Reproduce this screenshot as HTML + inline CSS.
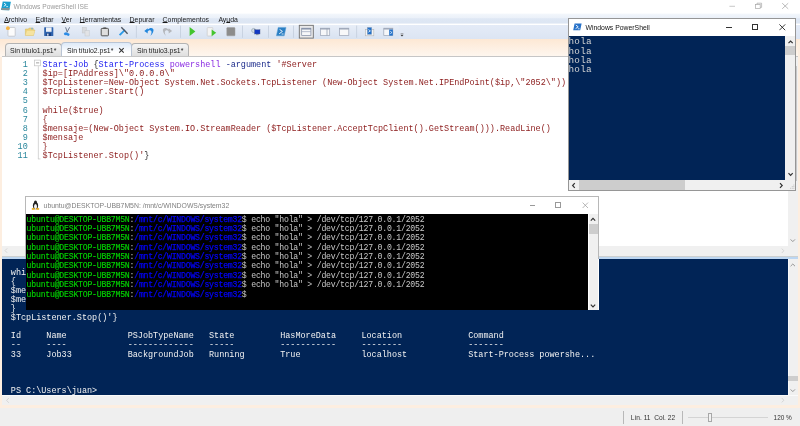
<!DOCTYPE html>
<html><head><meta charset="utf-8"><title>Windows PowerShell ISE</title>
<style>
html,body{margin:0;padding:0;}
body{width:800px;height:426px;overflow:hidden;position:relative;background:#fff;will-change:transform;font-family:"Liberation Sans",sans-serif;}
div,span,pre{position:absolute;margin:0;padding:0;box-sizing:border-box;white-space:pre;}
span{position:static;}
.ui{font-family:"Liberation Sans",sans-serif;font-size:6.9px;color:#1a1a1a;line-height:9px;}
.mono{font-family:"Liberation Mono",monospace;}
.ed{font-family:"Liberation Mono",monospace;font-size:8.47px;line-height:9.08px;color:#8b1a1a;left:42.6px;}
.ln{font-family:"Liberation Mono",monospace;font-size:8.47px;line-height:9.08px;color:#2a879c;left:10.4px;width:17.4px;text-align:right;}
.cs{font-family:"Liberation Mono",monospace;font-size:8.47px;line-height:9.08px;color:#f2f2f2;left:10.8px;}
.ub{font-family:"Liberation Mono",monospace;font-size:8.2px;letter-spacing:-0.234px;line-height:9.37px;color:#c8c8c8;left:26.6px;height:9.37px;}
.g{color:#00d400;-webkit-text-stroke:0.14px #00d400}.b{color:#0404f6;-webkit-text-stroke:0.25px #0404f6}
.ps{font-family:"Liberation Mono",monospace;font-size:9.3px;letter-spacing:0.2px;line-height:9.37px;color:#d4d4d4;left:568.6px;}
.cmd{color:#2424f0}.str{color:#8b1a1a}.prm{color:#1b2a8a}.arg{color:#8a2be2}
u{text-decoration:underline;text-decoration-thickness:0.6px;text-underline-offset:0.1px;}
</style></head><body>

<!-- ===== ISE main window ===== -->
<div id="titlebar" style="left:0;top:0;width:800px;height:13.5px;background:#fff;"></div>
<svg style="position:absolute;left:0;top:0;" width="13" height="12" viewBox="0 0 13 12"><path d="M2.7 1.6 L10.9 1.8 L9.2 10.3 L1.1 10.1 Z" fill="#1a9fce"/><path d="M1.5 7.9 L9.7 7.9 L9.2 10.3 L1.1 10.1 Z" fill="#7f9599"/><path d="M4 3.1 L6.1 4.7 L3.8 6.3" fill="none" stroke="#fff" stroke-width="0.9"/><path d="M6.2 6.6 L8.1 6.6" stroke="#fff" stroke-width="0.7"/></svg>
<div class="ui" style="left:13.5px;top:2.4px;color:#9a9a9a;font-size:6.65px;">Windows PowerShell ISE</div>
<svg style="position:absolute;left:725px;top:0;" width="70" height="13" viewBox="725 0 70 13">
 <path d="M729.4 6.3 L735 6.3" stroke="#b0b0b0" stroke-width="0.7" fill="none"/>
 <rect x="755.6" y="4.4" width="4.6" height="4.2" fill="none" stroke="#a8a8a8" stroke-width="0.7"/>
 <path d="M757 4.4 L757 3.2 L761.6 3.2 L761.6 7.4 L760.2 7.4" fill="none" stroke="#a8a8a8" stroke-width="0.7"/>
 <path d="M782.2 3.2 L788.2 8.8 M788.2 3.2 L782.2 8.8" stroke="#aaa" stroke-width="0.8" fill="none"/>
</svg>


<div id="menubg" style="left:0;top:12.8px;width:800px;height:11.7px;background:linear-gradient(#ffffff 0%,#f1f5fb 14%,#ebf1f9 44%,#dee7f4 52%,#dde6f3 88%,#f3f6fb 100%);"></div>
<div id="toolbg2" style="left:0;top:24.5px;width:800px;height:14.8px;background:linear-gradient(#e4ebf7,#dce5f3);"></div>
<div class="ui" style="left:4.2px;top:15.1px;"><u>A</u>rchivo</div>
<div class="ui" style="left:35.6px;top:15.1px;"><u>E</u>ditar</div>
<div class="ui" style="left:61.6px;top:15.1px;"><u>V</u>er</div>
<div class="ui" style="left:79.8px;top:15.1px;"><u>H</u>erramientas</div>
<div class="ui" style="left:129.6px;top:15.1px;"><u>D</u>epurar</div>
<div class="ui" style="left:162.6px;top:15.1px;"><u>C</u>omplementos</div>
<div class="ui" style="left:218.4px;top:15.1px;">Ay<u>u</u>da</div>

<div id="tabstrip" style="left:0;top:39.3px;width:800px;height:17.4px;background:linear-gradient(#fde8d4,#fef7f0);"></div>
<div id="leftedge" style="left:0;top:57px;width:2.2px;height:349px;background:#fdeee0;"></div>


<!-- toolbar background -->
<div id="toolbarbg" style="left:0;top:24.6px;width:398.7px;height:14.6px;border-radius:0 2px 2px 0;background:linear-gradient(#e8eef8,#d8e2f1);"></div>
<svg id="toolbar" style="position:absolute;left:0;top:24px;" width="410" height="16" viewBox="0 24 410 16">
 <!-- new -->
 <rect x="8" y="27.4" width="7.2" height="8.8" rx="0.8" fill="#fcfcfc" stroke="#b9bcc2" stroke-width="0.7"/>
 <circle cx="7.9" cy="28.2" r="1.9" fill="#f6b444"/>
 <!-- open -->
 <path d="M25.4 35.4 L25.4 29 L28.3 29 L29.2 28 L33.2 28 L33.2 30 L34.9 30 L33.5 35.4 Z" fill="#ecd27a" stroke="#d8b85a" stroke-width="0.5"/>
 <path d="M25.5 35.3 L27 30.8 L34.8 30.8 L33.4 35.3 Z" fill="#f5e3a0"/>
 <circle cx="32" cy="28.6" r="0.9" fill="#7fb2d9"/>
 <!-- save -->
 <rect x="44.2" y="27.2" width="9.1" height="8.8" rx="0.5" fill="#2d62ad"/>
 <rect x="46" y="27.4" width="5.6" height="4.4" fill="#eef1f5"/>
 <rect x="46.4" y="33.2" width="4.6" height="2.8" fill="#1b3f7e"/>
 <rect x="47" y="33.6" width="1.6" height="2.1" fill="#c9d5e8"/>
 <!-- cut -->
 <path d="M65.6 27.3 L67.3 32.2 M69.6 27.3 L67 32.2" stroke="#5d6b80" stroke-width="0.9" fill="none"/>
 <ellipse cx="66" cy="33.7" rx="2.1" ry="1.5" fill="#2a8be6"/>
 <ellipse cx="68.2" cy="34.6" rx="1.3" ry="1.3" fill="#2a8be6"/>
 <!-- copy -->
 <rect x="82.2" y="27.6" width="4.2" height="5.4" fill="#d9dbde" stroke="#c3c6ca" stroke-width="0.5"/>
 <rect x="85" y="30.6" width="4.2" height="5.4" fill="#e2e3e6" stroke="#c3c6ca" stroke-width="0.5"/>
 <!-- paste -->
 <rect x="101.2" y="28.4" width="7.2" height="7.4" rx="0.7" fill="#dedede" stroke="#555" stroke-width="1"/>
 <rect x="103.3" y="27.4" width="3" height="1.5" fill="#555"/>
 <!-- ps clear -->
 <path d="M119.6 35.2 L125 29.8" stroke="#2a9ae8" stroke-width="1.9" fill="none"/>
 <path d="M121.3 27.2 L127.6 33.8" stroke="#4d5560" stroke-width="1.3" fill="none"/>
 <!-- sep -->
 <rect x="135.9" y="25.6" width="0.8" height="12.2" fill="#c3cddc"/>
 <!-- undo -->
 <path id="undo" d="M144.3 30.9 L147.7 28.2 L147.7 29.5 C150 27 153.9 27.4 153.5 30.6 C153.2 33 151.6 35 150.3 36 C151.6 33.6 152.2 30.8 150.4 30.4 C149.4 30.2 148.4 30.8 147.7 31.5 L147.7 33.4 Z" fill="#2186dc"/>
 <!-- redo -->
 <path d="M144.3 30.9 L147.7 28.2 L147.7 29.5 C150 27 153.9 27.4 153.5 30.6 C153.2 33 151.6 35 150.3 36 C151.6 33.6 152.2 30.8 150.4 30.4 C149.4 30.2 148.4 30.8 147.7 31.5 L147.7 33.4 Z" fill="#b4b7bc" transform="translate(316.4 0) scale(-1 1)"/>
 <!-- sep -->
 <rect x="180.1" y="25.6" width="0.8" height="12.2" fill="#c3cddc"/>
 <!-- run -->
 <path d="M189.6 27 L195.4 31.5 L189.6 36 Z" fill="#43c52f"/>
 <!-- run selection -->
 <rect x="207.2" y="27.6" width="5.6" height="8.4" rx="0.6" fill="#f4f4f4" stroke="#c4c4c4" stroke-width="0.6"/>
 <path d="M211.6 29.6 L216.2 32.8 L211.6 36.2 Z" fill="#43c52f"/>
 <!-- stop -->
 <rect x="226.8" y="27.6" width="8.2" height="8.2" rx="0.6" fill="#8c8c8c" stroke="#9d9d9d" stroke-width="0.5"/>
 <!-- sep -->
 <rect x="242.2" y="25.6" width="0.8" height="12.2" fill="#c3cddc"/>
 <!-- remote -->
 <circle cx="253.7" cy="30.5" r="2.1" fill="#d3dce4" stroke="#8c9daa" stroke-width="0.6"/>
 <rect x="254.6" y="29.8" width="5.4" height="4.2" fill="#1238c4" stroke="#4a5a8a" stroke-width="0.4"/>
 <rect x="256" y="34.2" width="2.6" height="0.9" fill="#7a8796"/>
 <!-- sep -->
 <rect x="268" y="25.6" width="0.8" height="12.2" fill="#c3cddc"/>
 <!-- ps -->
 <path d="M278.2 27.4 L286 27.4 L284.2 35.8 L276.4 35.8 Z" fill="#2b7fc4" stroke="#5aa0d8" stroke-width="0.5"/>
 <path d="M279.6 29.4 L282.4 31.4 L279.2 33.8" fill="none" stroke="#fff" stroke-width="0.9"/>
 <path d="M281.6 34 L283.6 34" stroke="#fff" stroke-width="0.8"/>
 <!-- sep -->
 <rect x="293" y="25.6" width="0.8" height="12.2" fill="#c3cddc"/>
 <!-- layout 1 selected -->
 <rect x="299.3" y="25.3" width="14" height="12.8" fill="#e9e9ea" stroke="#6d6d6d" stroke-width="0.9"/>
 <rect x="301.7" y="28.2" width="9.2" height="7.4" fill="#f6f7f9" stroke="#7f8ba3" stroke-width="0.7"/>
 <rect x="301.7" y="28.2" width="9.2" height="1.3" fill="#7f8ba3"/>
 <rect x="301.7" y="31.4" width="9.2" height="0.7" fill="#9aa5ba"/>
 <!-- layout 2 -->
 <rect x="320.5" y="28.2" width="9.2" height="7.4" fill="#f6f7f9" stroke="#9aa3b5" stroke-width="0.7"/>
 <rect x="320.5" y="28.2" width="9.2" height="1.3" fill="#9aa3b5"/>
 <rect x="326.6" y="28.2" width="0.8" height="7.4" fill="#9aa3b5"/>
 <!-- layout 3 -->
 <rect x="339.6" y="28.2" width="9.2" height="7.4" fill="#f8f8f9" stroke="#9aa3b5" stroke-width="0.7"/>
 <rect x="339.6" y="28.2" width="9.2" height="1.3" fill="#9aa3b5"/>
 <!-- sep -->
 <rect x="356.3" y="25.6" width="0.8" height="12.2" fill="#c3cddc"/>
 <!-- show script pane top -->
 <rect x="365.4" y="29.4" width="8.4" height="6.4" fill="#f4f4f4" stroke="#b4b4b4" stroke-width="0.6"/>
 <rect x="367.3" y="27.4" width="4.4" height="7" fill="#1f6fc9" stroke="#9aa3b5" stroke-width="0.4"/>
 <path d="M368.4 29.6 L370.4 30.9 L368.4 32.2" fill="none" stroke="#fff" stroke-width="0.8"/>
 <!-- show script pane right -->
 <rect x="383.8" y="28.2" width="9" height="7.4" fill="#f6f7f9" stroke="#9aa3b5" stroke-width="0.7"/>
 <rect x="383.8" y="28.2" width="9" height="1.3" fill="#9aa3b5"/>
 <rect x="389.2" y="29.5" width="3.6" height="6.1" fill="#1f6fc9"/>
 <path d="M390.2 31.2 L392 32.5 L390.2 33.8" fill="none" stroke="#fff" stroke-width="0.7"/>
 <!-- grip -->
 <rect x="400.6" y="33.6" width="2.8" height="0.7" fill="#555"/>
 <path d="M400.6 35 L403.4 35 L402 36.6 Z" fill="#333"/>
</svg>

<!-- tabs -->
<div style="left:4.5px;top:43.2px;width:57.2px;height:13.4px;border:0.7px solid #b3b3b3;border-bottom:none;border-radius:4px 4px 0 0;background:linear-gradient(#f4f4f4,#dedede);"></div>
<div style="left:131.2px;top:43.2px;width:57.8px;height:13.4px;border:0.7px solid #b3b3b3;border-bottom:none;border-radius:4px 4px 0 0;background:linear-gradient(#f4f4f4,#dedede);"></div>
<div style="left:61.4px;top:41.8px;width:70.2px;height:15.2px;border:0.7px solid #b9c4d4;border-bottom:none;border-radius:4px 4px 0 0;background:linear-gradient(#dde9f8,#ffffff 65%);"></div>
<div class="ui tab" style="left:10px;top:45.6px;">Sin título1.ps1*</div>
<div class="ui tab" style="left:67px;top:45.6px;">Sin título2.ps1*</div>
<div class="ui tab" style="left:137px;top:45.6px;">Sin título3.ps1*</div>
<svg style="position:absolute;left:118px;top:47px;" width="7" height="7" viewBox="0 0 7 7"><path d="M1.2 1.2 L5.7 5.7 M5.7 1.2 L1.2 5.7" stroke="#333" stroke-width="1.1" fill="none"/></svg>

<!-- editor -->
<div id="editor" style="left:2.2px;top:56.3px;width:795.4px;height:199.2px;background:#fff;border-top:0.7px solid #c6c6c6;"></div>

<div class="ln" style="top:61.10px;">1</div><div class="ed" style="top:61.10px;"><span class="cmd">Start-Job</span> <span style="color:#222">{</span><span class="cmd">Start-Process</span> <span class="arg">powershell</span> <span class="prm">-argument</span> '#Server</div>
<div class="ln" style="top:70.18px;">2</div><div class="ed" style="top:70.18px;">$ip=[IPAddress]\"0.0.0.0\"</div>
<div class="ln" style="top:79.26px;">3</div><div class="ed" style="top:79.26px;">$TcpListener=New-Object System.Net.Sockets.TcpListener (New-Object System.Net.IPEndPoint($ip,\"2052\"))</div>
<div class="ln" style="top:88.34px;">4</div><div class="ed" style="top:88.34px;">$TcpListener.Start()</div>
<div class="ln" style="top:97.42px;">5</div>
<div class="ln" style="top:106.50px;">6</div><div class="ed" style="top:106.50px;">while($true)</div>
<div class="ln" style="top:115.58px;">7</div><div class="ed" style="top:115.58px;">{</div>
<div class="ln" style="top:124.66px;">8</div><div class="ed" style="top:124.66px;">$mensaje=(New-Object System.IO.StreamReader ($TcpListener.AcceptTcpClient().GetStream())).ReadLine()</div>
<div class="ln" style="top:133.74px;">9</div><div class="ed" style="top:133.74px;">$mensaje</div>
<div class="ln" style="top:142.82px;">10</div><div class="ed" style="top:142.82px;">}</div>
<div class="ln" style="top:151.90px;">11</div><div class="ed" style="top:151.90px;">$TcpListener.Stop()'<span style="color:#222">}</span></div>
<svg style="position:absolute;left:33px;top:58px;" width="10" height="104" viewBox="33 58 10 104">
 <rect x="34.6" y="60.1" width="5.9" height="5.7" fill="#fff" stroke="#c2c2c2" stroke-width="0.7"/>
 <rect x="36" y="62.5" width="3.2" height="0.8" fill="#8a8a8a"/>
 <rect x="37.9" y="66.1" width="0.7" height="93" fill="#c6c6c6"/>
 <rect x="37.9" y="158.6" width="2.6" height="0.7" fill="#c6c6c6"/>
</svg>
<div id="edvs" style="left:788px;top:57px;width:9.7px;height:188.6px;background:#f0f0f0;"></div>
<div id="edthumb" style="left:788.6px;top:66.2px;width:8.9px;height:115px;background:#c8c8c8;"></div>
<div id="edhs" style="left:2.2px;top:245.5px;width:795.4px;height:10.4px;background:#f0f0f0;"></div>
<div id="rightedge" style="left:797.6px;top:40px;width:2.4px;height:366px;background:#fdeee0;"></div>
<div id="splitter" style="left:2.2px;top:255.8px;width:795.4px;height:3.3px;background:linear-gradient(#cdd0d0 0%,#cdd0d0 24%,#bcd6f2 26%,#bcd6f2 100%);"></div>

<!-- console pane -->
<div id="console" style="left:2.2px;top:259.1px;width:785.8px;height:135.9px;background:#012456;"></div>

<div class="cs" style="top:268.56px;">while($true)</div>
<div class="cs" style="top:277.66px;">{</div>
<div class="cs" style="top:286.72px;">$mensaje=(New-Object System.IO.StreamReader ($TcpListener.AcceptTcpClient().GetStream())).ReadLine()</div>
<div class="cs" style="top:295.80px;">$mensaje</div>
<div class="cs" style="top:304.86px;">}</div>
<div class="cs" style="top:313.96px;">$TcpListener.Stop()'}</div>
<div class="cs" style="top:332.06px;">Id     Name            PSJobTypeName   State         HasMoreData     Location             Command</div>
<div class="cs" style="top:341.16px;">--     ----            -------------   -----         -----------     --------             -------</div>
<div class="cs" style="top:350.80px;">33     Job33           BackgroundJob   Running       True            localhost            Start-Process powershe...</div>
<div class="cs" style="top:387.40px;">PS C:\Users\juan&gt;</div>

<div id="csvs" style="left:788px;top:259.1px;width:9.7px;height:137px;background:#f0f0f0;border-left:0.8px solid #fafafa;"></div>
<div id="cshs" style="left:2.2px;top:395px;width:795.5px;height:10.2px;background:#f0f0f0;border-top:1.1px solid #fafafa;"></div>
<div id="botedge" style="left:0;top:405.2px;width:800px;height:2.8px;background:#fdeee0;"></div>


<div style="left:787.9px;top:376.4px;width:9.8px;height:4.6px;background:#cdcdcd;"></div>
<svg style="position:absolute;left:780px;top:236px;" width="18" height="170" viewBox="780 236 18 170">
 <path d="M790.6 239.4 L792.8 241.6 L795 239.4" fill="none" stroke="#8c8c8c" stroke-width="0.9"/>
 <path d="M781.8 248.6 L783.8 250.8 L781.8 253" fill="none" stroke="#d2d2d2" stroke-width="0.9"/>
 <path d="M790.6 266.2 L792.8 264 L795 266.2" fill="none" stroke="#8c8c8c" stroke-width="0.9"/>
 <path d="M790.6 389.4 L792.8 391.6 L795 389.4" fill="none" stroke="#8c8c8c" stroke-width="0.9"/>
 <path d="M781.8 398 L783.8 400.2 L781.8 402.4" fill="none" stroke="#d2d2d2" stroke-width="0.9"/>
</svg>
<svg style="position:absolute;left:2px;top:396px;" width="12" height="10" viewBox="2 396 12 10">
 <path d="M8.8 398 L6.6 400.4 L8.8 402.8" fill="none" stroke="#d2d2d2" stroke-width="0.9"/>
</svg>
<svg style="position:absolute;left:2px;top:246px;" width="12" height="10" viewBox="2 246 12 10">
 <path d="M7.2 248.4 L5 250.6 L7.2 252.8" fill="none" stroke="#d2d2d2" stroke-width="0.9"/>
</svg>

<!-- status bar -->
<div id="status" style="left:0;top:407.9px;width:800px;height:18.1px;background:#efefef;"></div>


<div style="left:623.2px;top:411px;width:0.7px;height:12.6px;background:#b8b8b8;"></div>
<div class="ui" style="left:630.8px;top:413px;font-size:6.62px;color:#333;">Lín. 11  Col. 22</div>
<div style="left:682.2px;top:411px;width:0.7px;height:12.6px;background:#b8b8b8;"></div>
<div style="left:688.4px;top:417.3px;width:79.6px;height:0.7px;background:#d4d4d4;"></div>
<div style="left:707.9px;top:413.3px;width:4.6px;height:8.4px;background:#f2f2f2;border:0.7px solid #a8a8a8;"></div>
<div class="ui" style="left:773.6px;top:413px;font-size:6.45px;color:#333;">120 %</div>


<div id="pswin" style="left:568px;top:18.1px;width:228px;height:172.8px;background:#fff;border:0.8px solid #969696;"></div>
<div id="pscon" style="left:568.8px;top:36px;width:216.6px;height:144px;background:#012456;"></div>
<div class="ui" style="left:585.5px;top:22.8px;font-size:6.85px;color:#111;">Windows PowerShell</div>
<svg style="position:absolute;left:572.6px;top:23px;" width="9" height="8" viewBox="0 0 9 8"><path d="M1.6 0.6 L8.6 0.6 L7.2 7.2 L0.2 7.2 Z" fill="#2671c8"/><path d="M2.8 2 L5.2 3.8 L2.6 5.6" fill="none" stroke="#fff" stroke-width="0.9"/><path d="M4.8 5.8 L6.6 5.8" stroke="#fff" stroke-width="0.8"/></svg>
<div style="left:725.8px;top:26.7px;width:5.8px;height:0.8px;background:#333;"></div>
<div style="left:752.2px;top:24.4px;width:5.4px;height:5.4px;border:0.7px solid #333;"></div>
<svg style="position:absolute;left:778.7px;top:24px;" width="7" height="7" viewBox="0 0 7 7"><path d="M0.4 0.4 L6.2 6.2 M6.2 0.4 L0.4 6.2" stroke="#222" stroke-width="0.9" fill="none"/></svg>
<div class="ps" style="top:37.30px;">hola</div>
<div class="ps" style="top:46.65px;">hola</div>
<div class="ps" style="top:56.00px;">hola</div>
<div class="ps" style="top:65.35px;">hola</div>
<!-- ps scrollbars -->
<div style="left:785.4px;top:36px;width:9.8px;height:144px;background:#f0f0f0;"></div>
<div style="left:785.4px;top:45.8px;width:9.8px;height:9px;background:#cdcdcd;"></div>
<div style="left:568.8px;top:180px;width:226.4px;height:9.8px;background:#f0f0f0;"></div>
<div style="left:579.2px;top:180px;width:106px;height:9.9px;background:#cdcdcd;"></div>
<svg style="position:absolute;left:568.8px;top:36px;" width="227" height="154" viewBox="0 0 227 154">
 <path d="M219.5 7.2 L221.6 5 L223.7 7.2" fill="none" stroke="#333" stroke-width="1.2"/>
 <path d="M219.5 137.2 L221.6 139.4 L223.7 137.2" fill="none" stroke="#333" stroke-width="1.2"/>
 <path d="M5.8 147.2 L3.6 149.5 L5.8 151.8" fill="none" stroke="#333" stroke-width="1.2"/>
 <path d="M211 147.2 L213.2 149.5 L211 151.8" fill="none" stroke="#333" stroke-width="1.2"/>
 <g fill="#b8b8b8"><rect x="224.4" y="150.2" width="0.9" height="0.9"/><rect x="224.4" y="151.8" width="0.9" height="0.9"/><rect x="222.8" y="151.8" width="0.9" height="0.9"/><rect x="221.2" y="151.8" width="0.9" height="0.9"/><rect x="222.8" y="150.2" width="0.9" height="0.9"/><rect x="224.4" y="148.6" width="0.9" height="0.9"/></g>
</svg>


<div id="ubwin" style="left:26px;top:196.6px;width:572.6px;height:113.8px;background:#fff;"></div>
<div id="ubframe" style="left:25.4px;top:196px;width:573.8px;height:63.1px;border:0.8px solid #b8b8b8;border-bottom:none;"></div>
<div id="ubcon" style="left:26px;top:214px;width:562.3px;height:96.4px;background:#000;"></div>
<div class="ui" style="left:43.6px;top:200.8px;font-size:6.86px;color:#808080;">ubuntu@DESKTOP-UBB7M5N: /mnt/c/WINDOWS/system32</div>
<svg style="position:absolute;left:31px;top:200px;" width="9" height="10" viewBox="0 0 9 10">
 <ellipse cx="4.5" cy="5.6" rx="2.6" ry="3.6" fill="#222"/>
 <ellipse cx="4.5" cy="2.4" rx="1.5" ry="1.9" fill="#222"/>
 <ellipse cx="4.5" cy="6.4" rx="1.5" ry="2.5" fill="#f4f4f4"/>
 <ellipse cx="2.3" cy="8.9" rx="1.7" ry="0.9" fill="#e8a817"/>
 <ellipse cx="6.7" cy="8.9" rx="1.7" ry="0.9" fill="#e8a817"/>
</svg>
<div style="left:529.6px;top:205.2px;width:5.6px;height:0.7px;background:#999;"></div>
<div style="left:555.2px;top:202.2px;width:5.4px;height:5.4px;border:0.7px solid #999;"></div>
<svg style="position:absolute;left:581.6px;top:201.8px;" width="7" height="7" viewBox="0 0 7 7"><path d="M0.6 0.6 L6 6 M6 0.6 L0.6 6" stroke="#999" stroke-width="0.7" fill="none"/></svg>
<div style="left:589.1px;top:214px;width:8.8px;height:96.4px;background:#f0f0f0;"></div>
<div style="left:589.1px;top:224.3px;width:8.8px;height:10px;background:#cdcdcd;"></div>
<svg style="position:absolute;left:588.4px;top:214px;" width="10" height="97" viewBox="0 0 10 97">
 <path d="M2.8 6.6 L5 4.4 L7.2 6.6" fill="none" stroke="#333" stroke-width="1.2"/>
 <path d="M2.8 90.6 L5 92.8 L7.2 90.6" fill="none" stroke="#333" stroke-width="1.2"/>
</svg>
<div class="ub" style="top:214.62px;"><span class="g">ubuntu@DESKTOP-UBB7M5N</span>:<span class="b">/mnt/c/WINDOWS/system32</span>$ echo "hola" &gt; /dev/tcp/127.0.0.1/2052</div>
<div class="ub" style="top:223.99px;"><span class="g">ubuntu@DESKTOP-UBB7M5N</span>:<span class="b">/mnt/c/WINDOWS/system32</span>$ echo "hola" &gt; /dev/tcp/127.0.0.1/2052</div>
<div class="ub" style="top:233.36px;"><span class="g">ubuntu@DESKTOP-UBB7M5N</span>:<span class="b">/mnt/c/WINDOWS/system32</span>$ echo "hola" &gt; /dev/tcp/127.0.0.1/2052</div>
<div class="ub" style="top:242.73px;"><span class="g">ubuntu@DESKTOP-UBB7M5N</span>:<span class="b">/mnt/c/WINDOWS/system32</span>$ echo "hola" &gt; /dev/tcp/127.0.0.1/2052</div>
<div class="ub" style="top:252.10px;"><span class="g">ubuntu@DESKTOP-UBB7M5N</span>:<span class="b">/mnt/c/WINDOWS/system32</span>$ echo "hola" &gt; /dev/tcp/127.0.0.1/2052</div>
<div class="ub" style="top:261.47px;"><span class="g">ubuntu@DESKTOP-UBB7M5N</span>:<span class="b">/mnt/c/WINDOWS/system32</span>$ echo "hola" &gt; /dev/tcp/127.0.0.1/2052</div>
<div class="ub" style="top:270.84px;"><span class="g">ubuntu@DESKTOP-UBB7M5N</span>:<span class="b">/mnt/c/WINDOWS/system32</span>$ echo "hola" &gt; /dev/tcp/127.0.0.1/2052</div>
<div class="ub" style="top:280.21px;"><span class="g">ubuntu@DESKTOP-UBB7M5N</span>:<span class="b">/mnt/c/WINDOWS/system32</span>$ echo "hola" &gt; /dev/tcp/127.0.0.1/2052</div>
<div class="ub" style="top:289.58px;"><span class="g">ubuntu@DESKTOP-UBB7M5N</span>:<span class="b">/mnt/c/WINDOWS/system32</span>$</div>

</body></html>
